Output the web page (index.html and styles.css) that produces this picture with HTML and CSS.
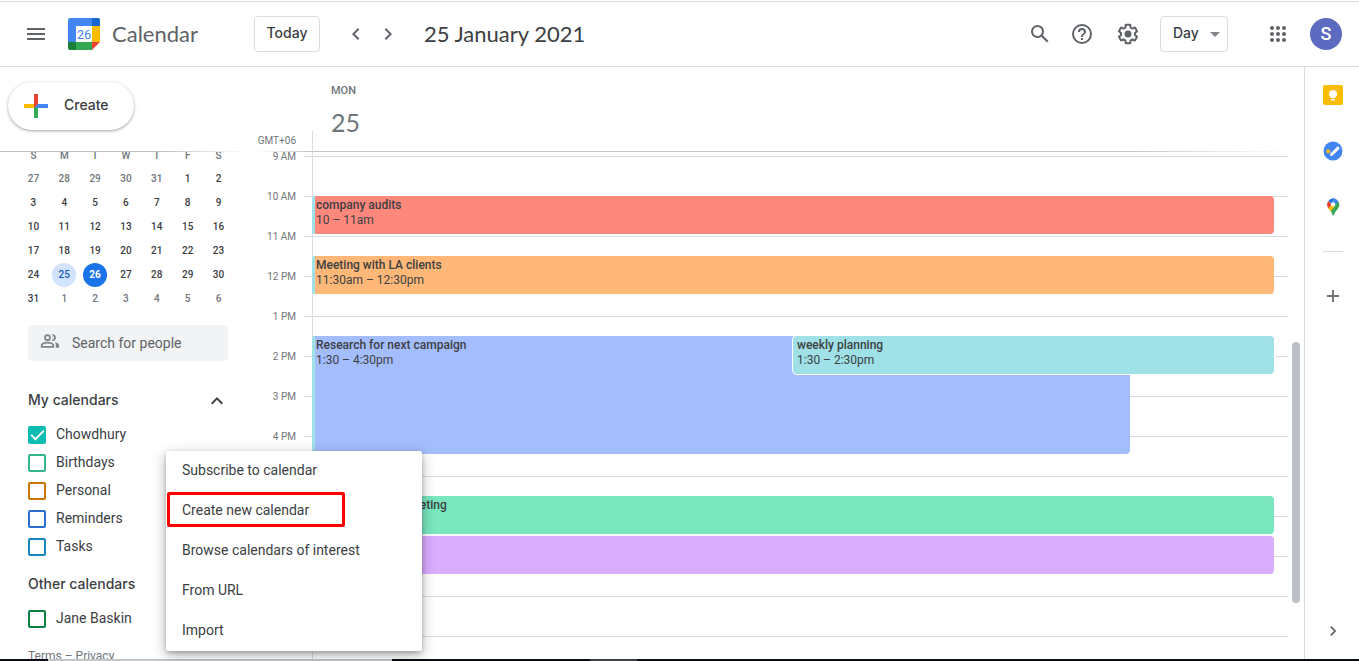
FILE: index.html
```html
<!DOCTYPE html>
<html lang="en">
<head>
<meta charset="utf-8">
<title>Calendar</title>
<link rel="stylesheet" href="styles.css">
</head>
<body>
<header class="topbar">
  <button class="icon-btn menu-btn" aria-label="Main menu">
    <svg width="24" height="24" viewBox="0 0 24 24"><path d="M3 18h18v-2H3v2zm0-5h18v-2H3v2zm0-7v2h18V6H3z"/></svg>
  </button>
  <svg class="logo" width="32" height="32" viewBox="0 0 32 32" role="img" aria-label="Calendar logo">
    <path fill="#4285f4" d="M2 0h22v8H8v16H0V2a2 2 0 0 1 2-2z"/>
    <path fill="#1967d2" d="M24 0h6a2 2 0 0 1 2 2v6h-8z"/>
    <path fill="#fbbc04" d="M24 8h8v16h-8z"/>
    <path fill="#34a853" d="M8 24h16v8H8z"/>
    <path fill="#188038" d="M0 24h8v8H2a2 2 0 0 1-2-2z"/>
    <path fill="#ea4335" d="M24 24h8l-8 8z"/>
    <path fill="#fff" d="M8 8h16v16H8z"/>
    <text class="logo-day" x="16" y="21" text-anchor="middle">26</text>
  </svg>
  <span class="brand">Calendar</span>
  <button class="outline-btn">Today</button>
  <div class="pager">
    <button class="icon-btn" aria-label="Previous day"><svg width="24" height="24" viewBox="0 0 24 24"><path d="M15.4 7.4 14 6l-6 6 6 6 1.400-1.400L10.800 12z"/></svg></button>
    <button class="icon-btn" aria-label="Next day"><svg width="24" height="24" viewBox="0 0 24 24"><path d="M10 6 8.600 7.400 13.200 12l-4.600 4.600L10 18l6-6z"/></svg></button>
  </div>
  <h1 class="current-date">25 January 2021</h1>
  <div class="tools">
    <button class="icon-btn" aria-label="Search"><svg width="24" height="24" viewBox="0 0 24 24"><path d="M20.500 19l-5.700-5.700a6.500 6.500 0 1 0-1.500 1.500l5.700 5.700zM5 9.500a4.500 4.500 0 1 1 9 0 4.500 4.500 0 0 1-9 0z"/></svg></button>
    <button class="icon-btn" aria-label="Support"><svg width="24" height="24" viewBox="0 0 24 24"><path d="M11 18h2v-2h-2v2zm1-16a10 10 0 1 0 0 20 10 10 0 0 0 0-20zm0 18a8 8 0 1 1 0-16 8 8 0 0 1 0 16zm0-14a4 4 0 0 0-4 4h2a2 2 0 1 1 4 0c0 2-3 1.750-3 5h2c0-2.250 3-2.500 3-5a4 4 0 0 0-4-4z"/></svg></button>
    <button class="icon-btn" aria-label="Settings"><svg width="24" height="24" viewBox="0 0 24 24"><path d="M13.850 22.250h-3.700c-.74 0-1.360-.54-1.450-1.270l-.27-1.890c-.27-.14-.53-.29-.79-.46l-1.800.72c-.7.26-1.470-.03-1.810-.65L2.200 15.530c-.35-.66-.2-1.440.36-1.880l1.530-1.190c-.01-.15-.02-.3-.02-.46 0-.15.01-.31.02-.46l-1.520-1.190c-.59-.45-.74-1.260-.37-1.880l1.850-3.190c.34-.62 1.110-.9 1.790-.63l1.810.73c.26-.17.52-.32.78-.46l.27-1.910c.09-.7.71-1.250 1.440-1.250h3.700c.74 0 1.360.54 1.450 1.270l.27 1.890c.27.14.53.29.79.46l1.800-.72c.71-.26 1.480.03 1.820.65l1.840 3.180c.36.66.2 1.440-.36 1.880l-1.520 1.190c.01.15.02.3.02.46s-.01.31-.02.46l1.520 1.190c.56.45.72 1.230.37 1.860l-1.860 3.220c-.34.62-1.110.9-1.800.63l-1.800-.72c-.26.17-.52.32-.78.46l-.27 1.910c-.1.680-.72 1.220-1.460 1.220zm-3.230-2h2.760l.37-2.550.53-.22c.44-.18.88-.44 1.340-.78l.45-.34 2.380.96 1.380-2.400-2.030-1.580.07-.56c.03-.26.06-.51.060-.78s-.03-.53-.06-.78l-.07-.56 2.030-1.580-1.390-2.400-2.390.96-.45-.35c-.42-.32-.87-.58-1.330-.77l-.52-.22-.37-2.550h-2.760l-.37 2.550-.53.210c-.44.190-.88.440-1.340.79l-.45.330-2.380-.95-1.390 2.390 2.030 1.580-.07.560a7 7 0 0 0-.06.790c0 .260.020.530.060.780l.07.560-2.030 1.580 1.380 2.400 2.390-.96.450.350c.430.330.860.580 1.330.770l.530.220.380 2.550z"/><circle cx="12" cy="12" r="3.500"/></svg></button>
    <div class="view-picker">
      <select aria-label="View"><option>Day</option></select>
      <svg width="10" height="5" viewBox="0 0 10 5"><path d="M0 0h10L5 5z"/></svg>
    </div>
    <button class="icon-btn apps-btn" aria-label="Apps"><svg width="24" height="24" viewBox="0 0 24 24"><g><circle cx="6" cy="6" r="2"/><circle cx="12" cy="6" r="2"/><circle cx="18" cy="6" r="2"/><circle cx="6" cy="12" r="2"/><circle cx="12" cy="12" r="2"/><circle cx="18" cy="12" r="2"/><circle cx="6" cy="18" r="2"/><circle cx="12" cy="18" r="2"/><circle cx="18" cy="18" r="2"/></g></svg></button>
    <button class="avatar" aria-label="Account">S</button>
  </div>
</header>

<div class="workspace">
  <aside class="sidebar">
    <div class="create-area">
      <button class="create-btn">
        <svg width="24" height="24" viewBox="0 0 24 24"><path fill="#fbbc04" d="M0 10h10v4H0z"/><path fill="#4285f4" d="M12 10h12v4H10z"/><path fill="#34a853" d="M10 14l2-1 2 1v10h-4z"/><path fill="#ea4335" d="M10 0h4v10l-4 4z"/></svg>
        <span>Create</span>
      </button>
    </div>
    <div class="side-rule"></div>
    <div class="side-scroll">
      <table class="mini">
        <thead><tr><th>S</th><th>M</th><th>T</th><th>W</th><th>T</th><th>F</th><th>S</th></tr></thead>
        <tbody>
          <tr><td class="dim">27</td><td class="dim">28</td><td class="dim">29</td><td class="dim">30</td><td class="dim">31</td><td>1</td><td>2</td></tr>
          <tr><td>3</td><td>4</td><td>5</td><td>6</td><td>7</td><td>8</td><td>9</td></tr>
          <tr><td>10</td><td>11</td><td>12</td><td>13</td><td>14</td><td>15</td><td>16</td></tr>
          <tr><td>17</td><td>18</td><td>19</td><td>20</td><td>21</td><td>22</td><td>23</td></tr>
          <tr><td>24</td><td><span class="day selected">25</span></td><td><span class="day today">26</span></td><td>27</td><td>28</td><td>29</td><td>30</td></tr>
          <tr><td>31</td><td class="dim">1</td><td class="dim">2</td><td class="dim">3</td><td class="dim">4</td><td class="dim">5</td><td class="dim">6</td></tr>
        </tbody>
      </table>
      <label class="people">
        <svg width="20" height="20" viewBox="0 0 24 24"><path d="M9 12a4 4 0 1 0 0-8 4 4 0 0 0 0 8zm0-6a2 2 0 1 1 0 4 2 2 0 0 1 0-4zm0 7c-2.700 0-8 1.340-8 4v3h16v-3c0-2.660-5.300-4-8-4zm6 5H3v-1c0-.7 3.100-2 6-2s6 1.300 6 2zM14 4.200a4 4 0 0 1 0 7.600c1-1 1.500-2.300 1.500-3.800S15 5.200 14 4.200zM15 12a4 4 0 1 0 0-8c-.5 0-.9.100-1.300.2a6 6 0 0 1 0 7.600c.4.100.8.200 1.300.2zm2.500 1.400c1 .9 1.500 2.100 1.500 3.600v3h4v-3c0-1.900-2.700-3.100-5.500-3.600z"/></svg>
        <input type="text" placeholder="Search for people" aria-label="Search for people">
      </label>
      <button class="section-head">My calendars
        <svg width="24" height="24" viewBox="0 0 24 24"><path d="M12 8l-6 6 1.400 1.400 4.600-4.600 4.600 4.600L18 14z"/></svg>
      </button>
      <ul class="cal-list">
        <li><label><input type="checkbox" class="c-teal" checked>Chowdhury</label></li>
        <li><label><input type="checkbox" class="c-green">Birthdays</label></li>
        <li><label><input type="checkbox" class="c-orange">Personal</label></li>
        <li><label><input type="checkbox" class="c-blue">Reminders</label></li>
        <li><label><input type="checkbox" class="c-sky">Tasks</label></li>
      </ul>
      <button class="section-head other">Other calendars</button>
      <ul class="cal-list">
        <li><label><input type="checkbox" class="c-forest">Jane Baskin</label></li>
      </ul>
      <p class="legal"><a href="#terms">Terms</a> – <a href="#privacy">Privacy</a></p>
    </div>
  </aside>

  <main class="calendar">
    <div class="day-head">
      <span class="zone">GMT+06</span>
      <div class="day-name"><span class="weekday">MON</span><span class="day-number">25</span></div>
    </div>
    <div class="head-rule"></div>
    <div class="viewport">
      <div class="schedule">
        <ul class="hours">
          <li><span>9 AM</span></li><li><span>10 AM</span></li><li><span>11 AM</span></li><li><span>12 PM</span></li><li><span>1 PM</span></li><li><span>2 PM</span></li><li><span>3 PM</span></li><li><span>4 PM</span></li><li></li><li></li><li></li><li></li><li></li>
        </ul>
        <div class="events">
          <article class="event audits"><strong>company audits</strong><span>10 – 11am</span></article>
          <article class="event clients"><strong>Meeting with LA clients</strong><span>11:30am – 12:30pm</span></article>
          <article class="event research"><strong>Research for next campaign</strong><span>1:30 – 4:30pm</span></article>
          <article class="event planning"><strong>weekly planning</strong><span>1:30 – 2:30pm</span></article>
          <article class="event meeting"><strong>Monthly budget meeting</strong></article>
          <article class="event evening"></article>
        </div>
      </div>
      <div class="track"><div class="thumb"></div></div>
    </div>
  </main>

  <aside class="apps">
    <button aria-label="Keep"><svg width="20" height="20" viewBox="0 0 20 20"><rect width="20" height="20" rx="2" fill="#fbbc04"/><path fill="#fff" d="M10 5a4 4 0 0 0-2.300 7.300V13h4.600v-.7A4 4 0 0 0 10 5zM8 14h4v1.500H8z"/></svg></button>
    <button aria-label="Tasks"><svg width="20" height="20" viewBox="0 0 20 20"><circle cx="10" cy="10" r="9.500" fill="#4285f4"/><path stroke="#fff" stroke-width="3" stroke-linecap="round" d="M8.500 13.500 15 7.200"/><circle cx="5.200" cy="10.200" r="2" fill="#fbbc04"/></svg></button>
    <button aria-label="Maps"><svg width="20" height="20" viewBox="0 0 20 20"><path fill="#34a853" d="M10 18.500c-.5 0-.8-1.800-1.500-3.200-.8-1.500-2-2.800-3-4.300L14.800 4a6 6 0 0 1 .2 7.500c-1.300 1.700-3 3.500-3.500 5-.4 1-.8 2-1.500 2z"/><path fill="#fbbc04" d="M5 10.200 8 6.800l3.800 2.800-4 4.700C7 13 5.600 12 5 10.200z"/><path fill="#ea4335" d="M5.400 4 9 7.200l-3.800 4A6.300 6.300 0 0 1 5.400 4z"/><path fill="#1a73e8" d="M5.400 4A6.200 6.200 0 0 1 12 1.400L8.600 6.600z"/><path fill="#4285f4" d="M12 1.400a6 6 0 0 1 3.300 3L11 9.200 8.500 6.500z"/><circle cx="10.100" cy="7.400" r="2.200" fill="#fff"/></svg></button>
    <hr>
    <button aria-label="Get add-ons"><svg width="20" height="20" viewBox="0 0 20 20"><path fill="#757575" d="M16 9v2h-5v5H9v-5H4V9h5V4h2v5z"/></svg></button>
    <button class="collapse" aria-label="Hide side panel"><svg width="20" height="20" viewBox="0 0 24 24"><path fill="#5f6368" d="M10 6 8.600 7.400 13.200 12l-4.600 4.600L10 18l6-6z"/></svg></button>
  </aside>
</div>
<div class="taskbar"></div>

<div class="popup" role="menu">
  <button role="menuitem">Subscribe to calendar</button>
  <button role="menuitem" class="marked">Create new calendar</button>
  <button role="menuitem">Browse calendars of interest</button>
  <button role="menuitem">From URL</button>
  <button role="menuitem">Import</button>
</div>
</body>
</html>
```

FILE: styles.css
```css
*, *::before, *::after { box-sizing: border-box; }
body {
  margin: 0;
  height: 100vh;
  display: flex;
  flex-direction: column;
  position: relative;
  overflow: hidden;
  background: #fff;
  color: #3c4043;
  font: 14px/20px Roboto, "Liberation Sans", sans-serif;
}
button, input, select { font: inherit; color: inherit; }
button { border: 0; padding: 0; background: none; cursor: pointer; }
ul { list-style: none; margin: 0; padding: 0; }
svg { display: block; flex: none; }

.topbar {
  flex: none;
  height: 66px;
  margin-top: 1px;
  padding: 0 17px 0 24px;
  display: flex;
  align-items: center;
  border-top: 1px solid #dadce0;
  border-bottom: 1px solid #dadce0;
}
.icon-btn { fill: #5f6368; }
.logo { margin-left: 20px; }
.logo-day { font: 400 13px Roboto, sans-serif; fill: #4285f4; }
.brand { margin-left: 12px; width: 142px; font: 22px/28px Lato, sans-serif; color: #5f6368; }
.outline-btn {
  width: 66px;
  height: 36px;
  padding-bottom: 2px;
  border: 1px solid #dadce0;
  border-radius: 4px;
  font: 500 14px/20px Inter, sans-serif;
}
.pager { display: flex; gap: 8px; margin-left: 24px; }
.current-date { margin: 0 0 0 24px; font: 400 22px/28px Lato, sans-serif; }
.tools { display: flex; align-items: center; margin-left: auto; }
.tools .icon-btn + .icon-btn { margin-left: 18px; }
.tools .icon-btn:nth-child(3) { margin-left: 22px; }
.view-picker { position: relative; margin-left: 20px; }
.view-picker select {
  appearance: none;
  display: block;
  width: 68px;
  height: 36px;
  padding: 0 12px 2px;
  border: 1px solid #dadce0;
  border-radius: 4px;
  background: #fff;
  font: 500 14px/20px Inter, sans-serif;
}
.view-picker svg { position: absolute; right: 8px; top: 16px; fill: #80868b; pointer-events: none; }
.tools .apps-btn { margin-left: 38px; }
.avatar {
  width: 32px;
  height: 32px;
  margin-left: 20px;
  border-radius: 50%;
  background: #5c6bc0;
  color: #fff;
  font-size: 18px;
  font-weight: 500;
}

.workspace { flex: 1; min-height: 0; display: flex; }

.sidebar { width: 248px; display: flex; flex-direction: column; }
.create-area { flex: none; height: 84px; padding: 15px 8px 0; }
.create-btn {
  height: 48px;
  padding: 0 25px 0 16px;
  display: flex;
  align-items: center;
  gap: 16px;
  border-radius: 24px;
  font: 500 14px/20px Inter, sans-serif;
  box-shadow: 0 1px 2px rgba(60, 64, 67, .3), 0 1px 3px 1px rgba(60, 64, 67, .15);
}
.create-btn span { padding-bottom: 2px; }
.side-rule, .head-rule { flex: none; height: 1px; }
.side-rule { background: linear-gradient(90deg, #bdc1c6 65%, transparent); }
.head-rule { margin: 0 16px 0 8px; background: linear-gradient(90deg, transparent, #c4c7c9 5%, #c4c7c9 85%, transparent); }
.side-scroll { flex: 1; min-height: 0; overflow: hidden; padding: 0 20px 0 28px; }

.mini {
  width: 216px;
  margin: -9px -10px 0;
  border-collapse: collapse;
  table-layout: fixed;
  font-size: 10px;
  line-height: 24px;
  font-weight: 500;
  text-align: center;
}
.mini th, .mini td { padding: 0; height: 24px; }
.mini th, .mini .dim { color: #70757a; font-weight: 500; }
.mini th { padding-top: 2px; line-height: 22px; }
.day { display: block; width: 24px; margin: 0 auto; border-radius: 50%; }
.selected { background: #d2e3fc; color: #185abc; }
.today { background: #1a73e8; color: #fff; font-weight: 700; }

.people {
  height: 36px;
  margin-top: 14px;
  padding: 0 12px;
  display: flex;
  align-items: center;
  gap: 12px;
  border-radius: 4px;
  background: #f1f3f4;
  fill: #80868b;
}
.people svg { margin-bottom: 4px; }
.people input { width: 100%; min-width: 0; padding: 0; border: 0; outline: 0; background: none; }
.people input::placeholder { color: #5f6368; opacity: 1; }
.section-head {
  width: 100%;
  height: 32px;
  margin-top: 24px;
  padding-bottom: 2px;
  display: flex;
  align-items: center;
  justify-content: space-between;
  font: 500 14px/20px Inter, sans-serif;
  fill: #3c4043;
}
.section-head.other { margin-top: 8px; }
.section-head svg { margin: 2px -1px 0 0; }
.cal-list { padding-top: 4px; }
.cal-list label { height: 28px; padding-bottom: 2px; display: flex; align-items: center; gap: 10px; }
.cal-list input {
  appearance: none;
  width: 18px;
  height: 18px;
  margin: 2px 0 0;
  display: grid;
  place-content: center;
  border: 2px solid;
  border-radius: 2px;
}
.cal-list input:checked { background: currentColor; }
.cal-list input:checked::before {
  content: "";
  width: 13px;
  height: 7px;
  margin-bottom: 3px;
  border: solid #fff;
  border-width: 0 0 2px 2px;
  transform: rotate(-45deg);
}
.c-teal { color: #0bbcb2; }
.c-green { color: #33b690; }
.c-orange { color: #c97300; }
.c-blue { color: #2a6fd0; }
.c-sky { color: #1a85bd; }
.c-forest { color: #0b8043; }
.legal { margin: 13px 0 0; font-size: 12px; line-height: 20px; color: #70757a; }
.legal a { color: inherit; text-decoration: none; }

.calendar { flex: 1; min-width: 0; display: flex; flex-direction: column; }
.day-head { flex: none; height: 84px; display: flex; align-items: flex-end; font-size: 10px; color: #70757a; }
.zone { width: 48px; text-align: right; }
.day-name { position: relative; align-self: stretch; margin-left: 16px; padding: 14px 18px 0 19px; display: flex; flex-direction: column; }
.day-name::after { content: ""; position: absolute; left: 0; bottom: 0; width: 1px; height: 20px; background: #dadce0; }
.weekday { font-size: 11px; font-weight: 500; line-height: 20px; }
.day-number { margin-top: 3px; font: 25px/36px Lato, sans-serif; }
.viewport { flex: 1; min-height: 0; display: flex; overflow: hidden; }
.schedule { flex: 1; display: grid; align-items: start; }
.hours { grid-area: 1 / 1; padding-top: 4px; background: linear-gradient(#dadce0, #dadce0) 64px 0 / 1px 100% no-repeat; }
.hours li {
  height: 40px;
  margin-left: 56px;
  border-top: 1px solid #dadce0;
  color: #70757a;
  font-size: 10px;
  line-height: 20px;
}
.hours span { display: block; width: 56px; margin: -10px 0 0 -64px; text-align: right; }
.events {
  grid-area: 1 / 1;
  margin: 4px 14px 0 64px;
  display: grid;
  grid-template-columns: 50% 35% 15%;
  grid-auto-rows: 20px;
}
.event {
  grid-column: 1 / -1;
  margin-bottom: 2px;
  padding: 2px 0 0 1px;
  display: flex;
  flex-direction: column;
  border-left: 3px solid #9fe1e7;
  border-radius: 2px 4px 4px 2px;
  font-size: 12px;
  line-height: 15px;
}
.event strong { font-weight: 500; }
.audits { grid-row: 3 / span 2; background: #ff887c; }
.clients { grid-row: 6 / span 2; background: #ffb878; }
.research { grid-row: 10 / span 6; grid-column: 1 / 3; background: #a4bdfc; }
.planning { grid-row: 10 / span 2; grid-column: 2 / -1; border-radius: 4px; background: #9fe1e7; box-shadow: 0 0 0 1px #fff; }
.meeting { grid-row: 18 / span 2; background: #7ae7bf; }
.evening { grid-row: 20 / span 2; background: #dbadff; }
.track { width: 16px; padding: 0 4px; }
.thumb { height: 51.5%; margin-top: 190px; border-radius: 4px; background: #bdc1c6; }

.apps {
  width: 55px;
  padding: 18px 0 18px 2px;
  display: flex;
  flex-direction: column;
  align-items: center;
  gap: 36px;
  border-left: 1px solid #dadce0;
}
.apps hr { width: 20px; margin: -2px 0; border: 0; border-top: 1px solid #dadce0; }
.apps .collapse { margin-top: auto; }

.taskbar {
  flex: none;
  height: 2px;
  background: linear-gradient(90deg, #0a0d14 48px, #c4c7c9 48px 392px, #0a0d14 392px 590px, #3c4043 590px 637px, #0a0d14 637px);
}

.popup {
  position: absolute;
  left: 166px;
  top: 451px;
  width: 256px;
  display: flex;
  flex-direction: column;
  border-radius: 2px;
  background: #fff;
  box-shadow: 0 2px 4px rgba(0, 0, 0, .2), 0 4px 14px rgba(0, 0, 0, .3);
}
.popup button { position: relative; height: 40px; padding: 0 16px 2px; text-align: left; }
.marked::after {
  content: "";
  position: absolute;
  left: 1px;
  top: 1px;
  width: 178px;
  height: 35px;
  border: 3px solid #f00;
  border-radius: 2px;
}
```
